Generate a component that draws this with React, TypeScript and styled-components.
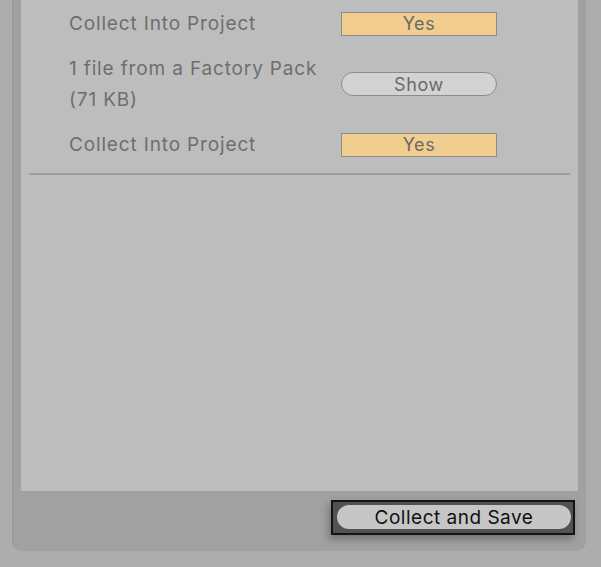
import React from "react";
import styled, { createGlobalStyle } from "styled-components";

const GlobalStyle = createGlobalStyle`
    html, body {
        margin: 0;
        padding: 0;
        background: #adadad;
        overflow: hidden;
    }
    body {
        font-family: Inter, "Liberation Sans", sans-serif;
    }
`;

const SFrame = styled.div`
    display: flex;
    flex-direction: column;
    width: 574px;
    height: 551px;
    margin-left: 12px;
    padding: 0 8px;
    background: #a1a1a1;
    border-left: 1px solid #979797;
    border-radius: 0 0 10px 10px;
    box-sizing: border-box;
`;

const SPanel = styled.div`
    display: flex;
    flex-direction: column;
    height: 491px;
    background: #bdbdbd;
    padding-top: 8px;
    box-sizing: border-box;
`;

const SRows = styled.div`
    display: flex;
    flex-direction: column;
    gap: 14px;
    padding-left: 48px;
`;

const SRow = styled.div`
    display: grid;
    grid-template-columns: 272px 156px;
    align-items: center;
`;

const SLabel = styled.div`
    font-size: 19px;
    line-height: 31px;
    letter-spacing: 0.85px;
    color: #6e6e6e;
`;

const SValueButton = styled.div<{ $pill?: boolean }>`
    display: flex;
    align-items: center;
    justify-content: center;
    height: 24px;
    box-sizing: border-box;
    border: 1.5px solid #8b8b8b;
    border-radius: ${(p) => (p.$pill ? "12px" : "0")};
    background: ${(p) => (p.$pill ? "#d3d3d3" : "#f1cd8f")};
    color: #6a6a6a;
    font-size: 18px;
    letter-spacing: 0.6px;
`;

const SDivider = styled.div`
    height: 2px;
    margin: 13px 8px 0;
    background: #9d9d9d;
`;

const SFooter = styled.div`
    display: flex;
    justify-content: flex-end;
    padding: 9px 3px 0 0;
`;

const SFocusBox = styled.div`
    display: flex;
    width: 244px;
    height: 35px;
    box-sizing: border-box;
    border: 2px solid #141414;
    background: #525252;
    padding: 3px 2px 4px 4px;
    box-shadow: -2px 4px 8px rgba(0, 0, 0, 0.3);
`;

const SSaveButton = styled.div`
    flex: 1;
    display: flex;
    align-items: center;
    justify-content: center;
    border-radius: 12px;
    background: #c6c6c6;
    color: #111;
    font-size: 19px;
    letter-spacing: 0.5px;
`;

const rows = [
    { label: ["Collect Into Project"], value: "Yes", pill: false },
    { label: ["1 file from a Factory Pack", "(71 KB)"], value: "Show", pill: true },
    { label: ["Collect Into Project"], value: "Yes", pill: false },
];

const App = () => {
    return (
        <>
            <GlobalStyle />
            <SFrame>
                <SPanel>
                    <SRows>
                        {rows.map((row, i) => (
                            <SRow key={i}>
                                <SLabel>
                                    {row.label.map((line) => (
                                        <div key={line}>{line}</div>
                                    ))}
                                </SLabel>
                                <SValueButton $pill={row.pill}>{row.value}</SValueButton>
                            </SRow>
                        ))}
                    </SRows>
                    <SDivider />
                </SPanel>
                <SFooter>
                    <SFocusBox>
                        <SSaveButton>Collect and Save</SSaveButton>
                    </SFocusBox>
                </SFooter>
            </SFrame>
        </>
    );
};

export default App;
